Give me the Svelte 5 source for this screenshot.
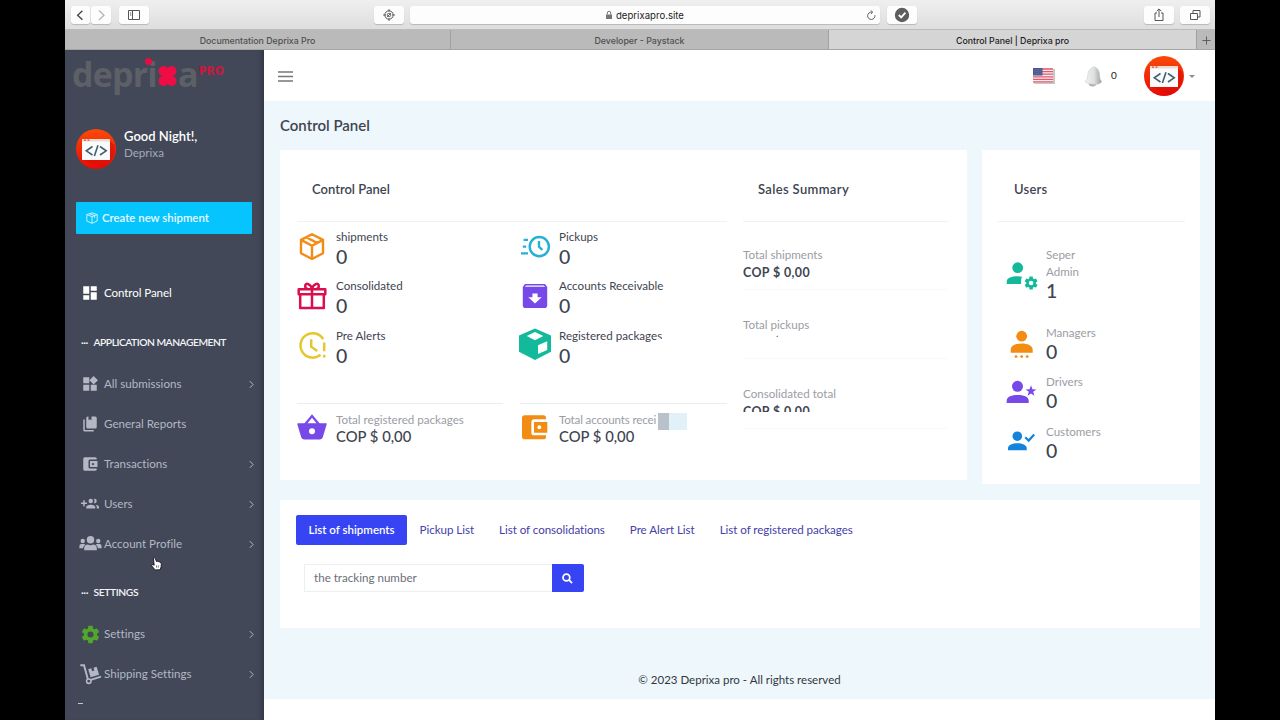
<script>
	const gear =
		'M12,15.5A3.5,3.5 0 0,1 8.5,12A3.5,3.5 0 0,1 12,8.5A3.5,3.5 0 0,1 15.5,12A3.5,3.5 0 0,1 12,15.5M19.43,12.97C19.47,12.65 19.5,12.33 19.5,12C19.5,11.67 19.47,11.34 19.43,11L21.54,9.37C21.73,9.22 21.78,8.95 21.66,8.73L19.66,5.27C19.54,5.05 19.27,4.96 19.05,5.05L16.56,6.05C16.04,5.66 15.5,5.32 14.87,5.07L14.5,2.42C14.46,2.18 14.25,2 14,2H10C9.75,2 9.54,2.18 9.5,2.42L9.13,5.07C8.5,5.32 7.96,5.66 7.44,6.05L4.95,5.05C4.73,4.96 4.46,5.05 4.34,5.27L2.34,8.73C2.21,8.95 2.27,9.22 2.46,9.37L4.57,11C4.53,11.34 4.5,11.67 4.5,12C4.5,12.33 4.53,12.65 4.57,12.97L2.46,14.63C2.27,14.78 2.21,15.05 2.34,15.27L4.34,18.73C4.46,18.95 4.73,19.03 4.95,18.95L7.44,17.94C7.96,18.34 8.5,18.68 9.13,18.93L9.5,21.58C9.54,21.82 9.75,22 10,22H14C14.25,22 14.46,21.82 14.5,21.58L14.87,18.93C15.5,18.67 16.04,18.34 16.56,17.94L19.05,18.95C19.27,19.03 19.54,18.95 19.66,18.73L21.66,15.27C21.78,15.05 21.73,14.78 21.54,14.63L19.43,12.97Z';
	const wallet =
		'M21,18V19A2,2 0 0,1 19,21H5C3.89,21 3,20.1 3,19V5A2,2 0 0,1 5,3H19A2,2 0 0,1 21,5V6H12C10.89,6 10,6.9 10,8V16A2,2 0 0,0 12,18M12,16H22V8H12M16,13.5A1.5,1.5 0 0,1 14.5,12A1.5,1.5 0 0,1 16,10.5A1.5,1.5 0 0,1 17.5,12A1.5,1.5 0 0,1 16,13.5Z';

	// inner svg markup, sidebar icons use a 24 unit box
	const menuIcons = {
		dashboard: '<path d="M13,3V9H21V3M13,21H21V11H13M3,21H11V15H3M3,13H11V3H3V13Z"/>',
		widgets:
			'<path d="M3,3H11V11H3ZM3,13H11V21H3ZM13,13H21V21H13ZM16.8,1.4L22.6,7.1L16.8,12.8L11.2,7.1Z"/>',
		reports:
			'<path d="M19,18H9A2,2 0 0,1 7,16V4A2,2 0 0,1 9,2H10V7L12,5.5L14,7V2H19A2,2 0 0,1 21,4V16A2,2 0 0,1 19,18M17,20V22H5A2,2 0 0,1 3,20V6H5V20H17Z"/>',
		wallet: `<path d="${wallet}"/>`,
		addUsers:
			'<path d="M13,13C11,13 7,14 7,16V18H19V16C19,14 15,13 13,13M19.62,13.16C20.45,13.88 21,14.82 21,16V18H24V16C24,14.46 21.63,13.5 19.62,13.16M13,11A3,3 0 0,0 16,8A3,3 0 0,0 13,5A3,3 0 0,0 10,8A3,3 0 0,0 13,11M18,11A3,3 0 0,0 21,8A3,3 0 0,0 18,5C17.68,5 17.37,5.05 17.08,5.14C17.65,5.95 18,6.94 18,8C18,9.06 17.65,10.04 17.08,10.85C17.37,10.95 17.68,11 18,11M8,10H5V7H3V10H0V12H3V15H5V12H8V10Z"/>',
		users:
			'<circle cx="12" cy="8.2" r="3.9"/><circle cx="3.9" cy="9.4" r="2.3"/><circle cx="20.1" cy="9.4" r="2.3"/><path d="M5.4,19V16.6C5.4,14.4 7,13.1 9.2,13.1C11,14 13,14 14.8,13.1C17,13.1 18.6,14.4 18.6,16.6V19ZM0.4,17V14.7Q0.4,12.5 2.6,12.5H5.2Q6,12.5 6.6,13Q4.3,14.4 4.2,17ZM23.6,17V14.7Q23.6,12.5 21.4,12.5H18.8Q18,12.5 17.4,13Q19.7,14.4 19.8,17Z"/>',
		gear: `<path d="${gear}"/>`,
		dolly:
			'<path d="M1.4,3.4H5.2L9.3,18M11.5,19L23,15.3" fill="none" stroke="currentColor" stroke-width="2"/><circle cx="10.2" cy="20" r="2.3" fill="none" stroke="currentColor" stroke-width="1.6"/><path d="M9.6,7.6L12.8,6.6L13.7,9.6L16,8.9L15.1,5.9L18.4,4.9L21,13.3L12.1,16Z"/>'
	};

	const menu = [
		{ label: 'All submissions', icon: 'widgets', arrow: true },
		{ label: 'General Reports', icon: 'reports' },
		{ label: 'Transactions', icon: 'wallet', arrow: true },
		{ label: 'Users', icon: 'addUsers', arrow: true },
		{ label: 'Account Profile', icon: 'users', arrow: true, wide: true }
	];

	const settingsMenu = [
		{ label: 'Settings', icon: 'gear', arrow: true, green: true },
		{ label: 'Shipping Settings', icon: 'dolly', arrow: true, wide: true }
	];

	const stats = [
		{
			label: 'shipments',
			color: 'orange',
			svg: '<g fill="none" stroke="currentColor" stroke-width="2.4" stroke-linejoin="round"><path d="M15,2.2L26,7.9V21.2L15,27L4,21.2V7.9ZM4,7.9L15,13.8L26,7.9M15,13.8V26.6M9.2,5.2L20.6,11.1"/></g>'
		},
		{
			label: 'Pickups',
			color: 'cyan',
			svg: '<g fill="none" stroke="currentColor" stroke-width="2.4"><circle cx="19.3" cy="14.6" r="9.6"/><path d="M19,9V14.8L22.4,17.8M3.6,7.9H8M2.8,14.6H6.2M1,21.4H8"/></g>'
		},
		{
			label: 'Consolidated',
			color: 'red',
			svg: '<g fill="none" stroke="currentColor" stroke-width="2.5" stroke-linejoin="round"><path d="M1.7,8.2H28.3V13.2H1.7ZM3.2,13.2V27H26.8V13.2M15,8V27M15,8C14,3 8.2,.8 8.2,5.2Q8.2,7.2 10.5,8M15,8C16,3 21.8,.8 21.8,5.2Q21.8,7.2 19.5,8"/></g>'
		},
		{
			label: 'Accounts Receivable',
			color: 'purple',
			svg: '<path fill-rule="evenodd" d="M5,3H25L27.2,6V24.2Q27.2,27 24.5,27H5.5Q2.8,27 2.8,24.2V6ZM6,4.4L5,5.7H25L24,4.4ZM12.4,12.5V16.2H8.3L15,22.5L21.7,16.2H17.6V12.5Z"/>'
		},
		{
			label: 'Pre Alerts',
			color: 'yellow',
			svg: '<g fill="none" stroke="currentColor" stroke-width="2.5"><path d="M26.2,8.2A12.2,12.2 0 1 0 23.5,23.8M14.2,8.3V15.7L20.2,20M27.2,11.5V20.3M27.2,23.7V26.6"/></g>'
		},
		{
			label: 'Registered package',
			cut: 's',
			color: 'teal',
			svg: '<path fill-rule="evenodd" d="M15,-2.6L31,4.6V20.8L15,29L-1,20.8V4.6ZM15,1L6.7,5.1L15,9.3L23.3,5.1ZM18,14.3V23L27.2,19V10.2Z"/>'
		}
	];

	const sales = [
		{ label: 'Total shipments', clip: '' },
		{ label: 'Total pickups', clip: 'clip-most' },
		{ label: 'Consolidated total', clip: 'clip-half' }
	];

	const users = [
		{
			label: 'Seper Admin',
			value: 1,
			color: 'teal',
			svg: `<circle cx="11.7" cy="7.7" r="5.4"/><path d="M.7,24V21.4C.7,18 6,16.3 11.7,16.3Q14,16.3 16,16.7Q14.6,20 15.2,24Z"/><path transform="translate(17.3 15.3) scale(.65)" fill-rule="evenodd" d="${gear}"/>`
		},
		{
			label: 'Managers',
			value: 0,
			color: 'orange',
			svg: '<circle cx="15.7" cy="7.2" r="5.4"/><path d="M4.7,23.8V20.7C4.7,16.5 10,14.5 15.7,14.5S26.7,16.5 26.7,20.7V23.8Z"/><circle cx="10" cy="27.6" r="1.4"/><circle cx="15.7" cy="27.6" r="1.4"/><circle cx="21.2" cy="27.6" r="1.4"/>'
		},
		{
			label: 'Drivers',
			value: 0,
			color: 'purple',
			svg: '<circle cx="11.5" cy="7.3" r="5.5"/><path d="M.7,24V21.4C.7,17.8 6,16 11.7,16S22.7,17.8 22.7,21.4V24ZM25,6.3L26.4,10.3L30.3,10.4L27.2,12.8L28.4,16.8L25,14.4L21.6,16.8L22.8,12.8L19.7,10.4L23.6,10.3Z"/>'
		},
		{
			label: 'Customers',
			value: 0,
			color: 'blue',
			svg: '<circle cx="11.3" cy="8.2" r="4.8"/><path d="M2,22.2V20.3C2,16.8 6.6,15.3 11.4,15.3S20.7,16.8 20.7,20.3V22.2Z"/><path d="M19.2,9.3L22.7,12.6L28.2,6.6" fill="none" stroke="currentColor" stroke-width="2.2"/>'
		}
	];

	const lists = [
		'List of shipments',
		'Pickup List',
		'List of consolidations',
		'Pre Alert List',
		'List of registered packages'
	];

	let active = $state(lists[0]);
</script>

{#snippet avatar()}
	<svg class="avatar" viewBox="0 0 40 40">
		<defs>
			<linearGradient id="red" x1="0" y1="0" x2="0" y2="1">
				<stop offset="0" stop-color="#fb4a08" />
				<stop offset="1" stop-color="#e80a06" />
			</linearGradient>
		</defs>
		<circle cx="20" cy="20" r="20" fill="url(#red)" />
		<path d="M34,12L38.5,16A20,20 0 0 1 25,39L6,30Z" fill="#d80d08" opacity=".6" />
		<path d="M6,10H34V31H6Z" fill="#fbfbfb" />
		<path d="M6,10H34V12.5H6Z" fill="#eadbd4" />
		<path d="M8,11.2H10M11.5,11.2H13.5" stroke="#e34a20" stroke-width="1.2" />
		<path
			d="M16.5,17.5L10.3,21.8L16.5,26M24,17.5L30.2,21.8L24,26M22,16.3L18.4,27"
			fill="none"
			stroke="#3f6170"
			stroke-width="1.6"
		/>
	</svg>
{/snippet}

{#snippet menuItem(item)}
	<a class="item" href="#top">
		<svg class="menu-icon" class:wide={item.wide} class:green={item.green} viewBox="0 0 24 24">
			{@html menuIcons[item.icon]}
		</svg>
		<span>{item.label}</span>
		{#if item.arrow}
			<svg class="chevron" viewBox="0 0 6 10"><path d="M1,1L5,5L1,9" /></svg>
		{/if}
	</a>
{/snippet}

<div class="screen">
	<div class="window">
		<div class="toolbar">
			<div class="tool back">
				<svg viewBox="0 0 20 18"><path d="M12,4.5L7,9.2L12,14" stroke="#444" stroke-width="1.4" /></svg>
			</div>
			<div class="tool forward">
				<svg viewBox="0 0 20 18"><path d="M8,4.5L13,9.2L8,14" stroke="#b5b5b5" stroke-width="1.3" /></svg>
			</div>
			<div class="tool panes">
				<svg viewBox="0 0 30 18"><path d="M9.5,4.5H20.5V13.5H9.5ZM13.5,4.5V13.5M11,7H12.3M11,9H12.3" stroke="#555" /></svg>
			</div>
			<div class="tool target">
				<svg viewBox="0 0 30 18">
					<circle cx="15" cy="9" r="4.2" stroke="#555" />
					<circle cx="15" cy="9" r="1.8" stroke="#777" />
					<path d="M15,3V6M15,12V15M9,9H12M18,9H21M13,11L17,7" stroke="#666" />
				</svg>
			</div>
			<div class="address">
				<svg class="lock" viewBox="0 0 8 10">
					<path d="M1,4.5H7V9H1Z" fill="#777" />
					<path d="M2.3,4.5V3A1.7,1.7 0 0 1 5.7,3V4.5" stroke="#777" />
				</svg>
				<span>deprixapro.site</span>
				<svg class="reload" viewBox="0 0 12 12">
					<path d="M9.7,5.6A4,4 0 1 1 6.5,2.4M5.2,.5L7.4,2.4L5.2,4.4" stroke="#555" />
				</svg>
			</div>
			<div class="tool check">
				<svg viewBox="0 0 30 18">
					<circle cx="15" cy="9" r="7.2" fill="#5e5e5e" />
					<path d="M11.8,9L14.2,11.4L18.4,6.6" stroke="#fff" stroke-width="1.8" />
				</svg>
			</div>
			<div class="tool share">
				<svg viewBox="0 0 30 18">
					<path d="M13,7H11V14.5H19V7H17M15,11V3M12.7,5.2L15,2.9L17.3,5.2" stroke="#555" />
				</svg>
			</div>
			<div class="tool windows">
				<svg viewBox="0 0 30 18">
					<path d="M10.5,7.5H17.5V13.5H10.5ZM13,7.2V4.5H20V11H17.8" stroke="#555" />
				</svg>
			</div>
		</div>
		<div class="tabs">
			<div class="tab first">Documentation Deprixa Pro</div>
			<div class="tab second">Developer - Paystack</div>
			<div class="tab current">Control Panel | Deprixa pro</div>
			<div class="tab plus">
				<svg viewBox="0 0 10 10"><path d="M5,.5V9.5M.5,5H9.5" stroke="#555" /></svg>
			</div>
		</div>

		<div class="page">
			<aside>
				<div class="logo">
					<span class="word">depri</span>
					<svg class="clover" viewBox="0 0 20 22">
						<circle cx="6" cy="6" r="5" />
						<circle cx="14" cy="6" r="5" />
						<circle cx="6" cy="16" r="5" />
						<circle cx="14" cy="16" r="5" />
						<path d="M4,11L10,5L16,11L10,17Z" />
					</svg>
					<span class="word">a</span>
					<span class="pro">PRO</span>
					<i class="dot"></i>
				</div>
				<div class="profile">
					{@render avatar()}
					<div>
						<div class="greeting">Good Night!,</div>
						<div class="name">Deprixa</div>
					</div>
				</div>
				<button class="create">
					<svg viewBox="0 0 12 12">
						<path d="M6,.8L11.2,2.6V9L6,11.3L.8,9V2.6ZM.8,2.6L6,4.6L11.2,2.6M6,4.6V11.3M3.4,1.7L8.6,3.6V6" />
					</svg>
					<span>Create new shipment</span>
				</button>
				<nav>
					<div class="active-item">
						{@render menuItem({ label: 'Control Panel', icon: 'dashboard' })}
					</div>
					<div class="section"><i>···</i>APPLICATION MANAGEMENT</div>
					{#each menu as item}
						{@render menuItem(item)}
					{/each}
					<div class="section settings"><i>···</i>SETTINGS</div>
					{#each settingsMenu as item}
						{@render menuItem(item)}
					{/each}
					<div class="more"></div>
				</nav>
				<svg class="pointer" viewBox="0 0 12 15">
					<path
						d="M2.6,1.2Q3.8,.2 4.7,1.6L6,4.8L7.2,4.6L8.6,5L9.9,5.4Q11.2,6 11.3,7.5Q11.4,10.5 10,13.8L4.6,14L1,9.8Q.2,8.3 1.5,8L3.5,8.8Z"
						fill="#fff"
						stroke="#15171c"
					/>
					<path d="M6,9V11.5M8,9V11.5" stroke="#333" stroke-width=".7" />
				</svg>
			</aside>

			<main>
				<header>
					<svg class="burger" viewBox="0 0 15 11">
						<path d="M0,1H15M0,5.5H15M0,10H15" />
					</svg>
					<svg class="flag" viewBox="0 0 24 19">
						<path d="M2,2H23V17H2Z" fill="#999" opacity=".55" />
						<path d="M1,1H21V15.5H1Z" fill="#f8ecef" />
						<path d="M1,2H21M1,4.6H21M1,7.2H21M1,9.8H21M1,12.4H21M1,14.8H21" stroke="#df5a6c" stroke-width="1.3" />
						<path d="M1,1H10.5V8.5H1Z" fill="#4c558e" />
						<path d="M2.4,2.8H10M2.4,4.8H10M2.4,6.8H10" stroke="#8990b9" stroke-width=".7" stroke-dasharray="1 1" />
					</svg>
					<svg class="bell" viewBox="0 0 20 24">
						<defs>
							<linearGradient id="bell">
								<stop offset="0" stop-color="#f1f1f1" />
								<stop offset=".55" stop-color="#dedfe0" />
								<stop offset="1" stop-color="#9b9da0" />
							</linearGradient>
						</defs>
						<ellipse cx="9" cy="20" rx="4" ry="2.4" fill="#b0b1b2" />
						<path
							d="M9,2.5Q10.5,.5 12,2.3Q16.3,4.5 16.4,11Q16.5,15.5 18.6,17.5Q17,20.8 10,20.2Q3,20 1,17.3Q4.2,14.5 4,10.5Q4.2,4.5 9,2.5Z"
							fill="url(#bell)"
							stroke="#c5c6c8"
							stroke-width=".5"
						/>
					</svg>
					<span class="count">0</span>
					{@render avatar()}
					<i class="caret"></i>
				</header>

				<div class="content">
					<h4>Control Panel</h4>
					<div class="cards">
						<div class="card summary">
							<section class="panel">
								<h5>Control Panel</h5>
								<div class="stats">
									{#each stats as stat}
										<div class="stat">
											<svg class="stat-icon {stat.color}" viewBox="0 0 30 30">{@html stat.svg}</svg>
											<div>
												<div class="stat-label">{stat.label}{#if stat.cut}<span class="cut">{stat.cut}</span>{/if}</div>
												<div class="stat-value">0</div>
											</div>
										</div>
									{/each}
								</div>
								<div class="totals">
									<div class="total">
										<svg class="stat-icon purple" viewBox="0 0 30 30">
											<path
												fill-rule="evenodd"
												d="M.5,11.3H7.5L15,2.3L22.5,11.3H29.5Q29.8,11.4 29.6,12.5L25.8,25.3Q25.2,27.4 23,27.4H7Q4.8,27.4 4.2,25.3L.4,12.5ZM10.5,11.3H19.5L15,5.8ZM15,16.3A3,3 0 1 0 15,22.3A3,3 0 1 0 15,16.3Z"
											/>
										</svg>
										<div>
											<div class="total-label">Total registered packages</div>
											<div class="total-value">COP $ 0,00</div>
										</div>
									</div>
									<div class="total">
										<svg class="stat-icon orange" viewBox="1.5 0.5 22.5 22.5"><path d={wallet} /></svg>
										<div>
											<div class="total-label narrow">Total accounts recei</div>
											<div class="total-value">COP $ 0,00</div>
										</div>
										<i class="block"></i>
									</div>
								</div>
							</section>
							<section class="sales">
								<h5>Sales Summary</h5>
								{#each sales as sale}
									<div class="sale">
										<div class="sale-label">{sale.label}</div>
										<div class="sale-value {sale.clip}">COP $ 0,00</div>
									</div>
								{/each}
							</section>
						</div>

						<div class="card users">
							<h5>Users</h5>
							{#each users as user}
								<div class="user" class:tall={user.value}>
									<svg class="user-icon {user.color}" viewBox="0 0 32 32">{@html user.svg}</svg>
									<div>
										<div class="user-label">{user.label}</div>
										<div class="user-value">{user.value}</div>
									</div>
								</div>
							{/each}
						</div>
					</div>

					<div class="card lists">
						<div class="pills">
							{#each lists as list}
								<button class:active={list === active} onclick={() => (active = list)}>{list}</button>
							{/each}
						</div>
						<div class="search">
							<input placeholder="the tracking number" />
							<button aria-label="search">
								<svg viewBox="0 0 12 12">
									<circle cx="4.8" cy="4.8" r="3.7" />
									<path d="M7.6,7.6L11,11" />
								</svg>
							</button>
						</div>
					</div>
				</div>
				<footer>© 2023 Deprixa pro - All rights reserved</footer>
			</main>
		</div>
	</div>
</div>

<style>
	:global(body) {
		background: #000;
	}
	* {
		box-sizing: border-box;
	}
	.screen {
		height: 720px;
		padding: 0 65px;
		overflow: hidden;
		background: #000;
		font-family: Lato, 'Open Sans', sans-serif;
		font-size: 11.6px;
		font-variant-ligatures: none;
		color: #3e4451;
	}
	.window {
		height: 720px;
		display: flex;
		flex-direction: column;
		overflow: hidden;
		background: #fff;
	}
	svg {
		display: block;
		flex: none;
		overflow: visible;
		fill: currentColor;
	}
	button {
		border: 0;
		font: inherit;
		color: inherit;
		background: none;
	}
	h4,
	h5 {
		margin: 0;
		font-weight: 600;
	}

	/* browser */
	.toolbar {
		height: 30px;
		flex: none;
		display: flex;
		align-items: center;
		padding: 0 5px 0 6px;
		background: linear-gradient(#efefef, #dedede);
		border-bottom: 1px solid #bcbcbc;
		font-family: Inter, Roboto, sans-serif;
	}
	.toolbar svg {
		fill: none;
	}
	.tool {
		width: 30px;
		height: 18px;
		flex: none;
		border-radius: 3px;
		background: #fdfdfd;
		box-shadow: 0 1px 1px rgba(0, 0, 0, 0.18);
	}
	.tool svg {
		height: 18px;
		width: 100%;
	}
	.back {
		width: 19px;
		margin-right: 1px;
	}
	.forward {
		width: 20px;
	}
	.panes {
		margin-left: 8px;
	}
	.target {
		margin-left: 225px;
	}
	.address {
		width: 470px;
		height: 18px;
		flex: none;
		margin: 0 7px 0 6px;
		padding: 1px 3px 0 0;
		display: flex;
		align-items: center;
		border-radius: 3px;
		background: #fdfdfd;
		box-shadow: 0 1px 1px rgba(0, 0, 0, 0.18);
		font-size: 9.6px;
		color: #222;
	}
	.lock {
		width: 8px;
		height: 10px;
		margin: -1px 3px 0 195px;
	}
	.reload {
		width: 11px;
		height: 11px;
		margin-left: auto;
	}
	.share {
		margin-left: auto;
		margin-right: 6px;
	}
	.tabs {
		height: 20px;
		flex: none;
		display: flex;
		border-bottom: 1px solid #a5a5a5;
		background: #bababa;
		font: 500 8.8px/19px Inter, Roboto, sans-serif;
		text-align: center;
		color: #4f4f4f;
	}
	.tab {
		padding-top: 1px;
		border-right: 1px solid #a0a0a0;
	}
	.first {
		width: 386px;
	}
	.second {
		width: 378px;
	}
	.current {
		width: 368px;
		background: #d5d5d5;
		color: #1c1c1c;
	}
	.plus {
		flex: 1;
		display: flex;
		align-items: center;
		justify-content: center;
		border: 0;
	}
	.plus svg {
		width: 9px;
		height: 9px;
	}

	/* sidebar */
	.page {
		flex: 1;
		display: flex;
		min-height: 0;
	}
	aside {
		position: relative;
		width: 199px;
		flex: none;
		background: #424857;
		box-shadow: inset -6px 0 5px -4px rgba(25, 30, 42, 0.45);
		color: #b3b8c4;
	}
	.logo {
		position: relative;
		height: 52px;
		padding-left: 7px;
		display: flex;
	}
	.word {
		font: 700 34px/48px 'Open Sans', sans-serif;
		letter-spacing: -0.8px;
		color: #5d6066;
	}
	.clover {
		width: 21px;
		height: 22px;
		margin-top: 15px;
		fill: #f00c45;
	}
	.pro {
		margin: 14px 0 0 1px;
		font: 800 12px/13px 'Open Sans', sans-serif;
		color: #c01b42;
	}
	.dot {
		position: absolute;
		left: 80px;
		top: 8px;
		width: 7px;
		height: 7px;
		border-radius: 50%;
		background: #e01045;
	}
	.profile {
		display: flex;
		gap: 8px;
		padding: 27px 0 0 11px;
		height: 100px;
	}
	.avatar {
		width: 40px;
		height: 40px;
	}
	.greeting {
		margin-top: -1px;
		font-size: 13px;
		font-weight: 600;
		line-height: 17px;
		color: #fff;
	}
	.name {
		line-height: 16px;
		color: #a3a8b5;
	}
	.create {
		width: 176px;
		height: 32px;
		margin: 0 0 39px 11px;
		padding: 0 0 0 10px;
		display: flex;
		align-items: center;
		gap: 4px;
		background: #06c4fd;
		border-radius: 1px;
		color: #e6f8ff;
		font-size: 11.4px;
		font-weight: 600;
	}
	.create svg {
		width: 12px;
		height: 12px;
		fill: none;
		stroke: #d8f5ff;
		stroke-width: 0.9;
	}
	.create span {
		padding-bottom: 1px;
	}
	nav {
		display: flex;
		flex-direction: column;
	}
	.item {
		height: 40px;
		padding: 0 10px 0 13px;
		display: flex;
		align-items: center;
		color: inherit;
		text-decoration: none;
	}
	.item span {
		flex: 1;
		padding-bottom: 2px;
	}
	.active-item {
		color: #fff;
	}
	.active-item span {
		letter-spacing: -0.1px;
	}
	.menu-icon {
		width: 18px;
		height: 18px;
		margin: 0 5px 0 3px;
	}
	.menu-icon.wide {
		width: 23px;
		height: 23px;
		margin: 0 2px 2px 1px;
	}
	.menu-icon.green {
		width: 21px;
		height: 21px;
		margin: 0 3px 0 2px;
		color: #52a62c;
	}
	.chevron {
		width: 5px;
		height: 9px;
		margin-top: 1px;
		fill: none;
		stroke: currentColor;
		stroke-width: 1.2;
	}
	.section {
		height: 51px;
		padding: 7px 0 0 16px;
		display: flex;
		align-items: center;
		font-size: 10.3px;
		font-weight: 600;
		letter-spacing: -0.5px;
		color: #f2f4f8;
	}
	.section i {
		width: 12.5px;
		font-style: normal;
	}
	.section.settings {
		height: 50px;
		padding-top: 5px;
		letter-spacing: -0.4px;
	}
	.more {
		width: 5px;
		height: 1px;
		margin: 9px 0 0 13px;
		background: #c3c7cf;
	}
	.pointer {
		position: absolute;
		left: 86px;
		top: 507px;
		width: 11px;
		height: 14px;
	}

	/* content */
	main {
		flex: 1;
		min-width: 0;
	}
	header {
		height: 51px;
		padding: 1px 20px 0 14px;
		display: flex;
		align-items: center;
	}
	.burger {
		width: 15px;
		height: 11px;
		margin-right: auto;
		stroke: #777;
		stroke-width: 1.7;
	}
	.flag {
		width: 24px;
		height: 19px;
		margin-right: 28px;
	}
	.bell {
		width: 19px;
		height: 23px;
		margin-right: 7px;
	}
	.count {
		width: 8px;
		margin: -3px 25px 0 1px;
		font-size: 10px;
		color: #222;
	}
	.caret {
		margin-left: 5px;
		border: 3.5px solid transparent;
		border-top-color: #8b8b8b;
		border-bottom: 0;
	}
	.content {
		padding: 0 15px 0 16px;
		background: #eef7fb;
	}
	h4 {
		font-size: 15px;
		line-height: 49px;
	}
	.cards {
		display: flex;
		align-items: flex-start;
		gap: 15px;
		height: 350px;
	}
	.card {
		background: #fff;
	}
	.summary {
		width: 687px;
		height: 330px;
		padding: 0 19px 0 17px;
		display: flex;
		gap: 16px;
	}
	.panel {
		width: 430px;
	}
	h5 {
		height: 72px;
		padding: 7px 0 0 15px;
		border-bottom: 1px solid #f1f2f3;
		font-size: 13px;
		line-height: 64px;
	}
	.stats {
		height: 181px;
		display: grid;
		grid-template-columns: 206px 207px;
		grid-auto-rows: 49.5px;
		column-gap: 17px;
		padding-top: 5px;
	}
	.stat {
		display: flex;
		gap: 9px;
	}
	.stat-icon {
		width: 30px;
		height: 30px;
		margin-top: 4.5px;
	}
	.stat-label {
		margin-top: -0.5px;
		line-height: 20px;
	}
	.cut {
		display: inline-block;
		height: 13px;
		overflow: hidden;
		line-height: 20px;
		vertical-align: top;
	}
	.stat-value,
	.user-value {
		font-size: 19.5px;
		font-weight: 500;
		line-height: 19px;
	}
	.totals {
		display: grid;
		grid-template-columns: 206px 207px;
		column-gap: 17px;
	}
	.total {
		position: relative;
		display: flex;
		gap: 9px;
		padding-top: 7px;
		border-top: 1px solid #ececec;
	}
	.total .stat-icon {
		margin-top: 1px;
	}
	.total-label,
	.sale-label,
	.user-label {
		line-height: 18px;
		color: #9a9da4;
	}
	.narrow {
		letter-spacing: -0.15px;
	}
	.total-value {
		margin-top: -1px;
		font-size: 14.8px;
		font-weight: 500;
		line-height: 16px;
	}
	.block {
		position: absolute;
		left: 138px;
		top: 9px;
		width: 29px;
		height: 17px;
		background: linear-gradient(90deg, #b9c2ca 38%, #e2f0f7 38%);
	}
	.orange {
		color: #f28c13;
	}
	.cyan {
		color: #27afd6;
	}
	.red {
		color: #da0f50;
	}
	.purple {
		color: #7649e8;
	}
	.yellow {
		color: #e8c62b;
	}
	.teal {
		color: #12b99a;
	}
	.blue {
		color: #1583dc;
	}
	.sales {
		width: 205px;
	}
	.sales h5 {
		letter-spacing: 0.35px;
	}
	.sale {
		height: 69.5px;
		padding-top: 26px;
		border-bottom: 1px solid #f9f9f9;
	}
	h5 + .sale {
		height: 67.5px;
		padding-top: 24px;
	}
	.sale-label {
		line-height: 17px;
	}
	.sale-value {
		height: 19px;
		line-height: 19px;
		overflow: hidden;
		font-size: 12.4px;
		font-weight: 700;
		letter-spacing: 0.4px;
	}
	.sale-value.clip-most {
		height: 4px;
	}
	.sale-value.clip-half {
		height: 10px;
	}
	.users {
		width: 218px;
		height: 334px;
		padding: 0 15px;
	}
	.users h5 {
		padding-left: 17px;
		margin-bottom: 24px;
		letter-spacing: 0.2px;
	}
	.user {
		height: 49.5px;
		padding-left: 9px;
		display: flex;
		gap: 8px;
	}
	.user.tall {
		height: 77.5px;
	}
	.user-icon {
		width: 32px;
		height: 32px;
		margin-top: 5.5px;
	}
	.tall .user-icon {
		margin-top: 14px;
	}
	.user-label {
		width: 60px;
		line-height: 17px;
	}
	.tall .user-label {
		width: 40px;
	}
	.user-value {
		line-height: 21px;
	}
	.lists {
		height: 128px;
		padding: 15px 16px 0;
	}
	.pills {
		display: flex;
	}
	.pills button {
		height: 30px;
		padding: 0 12.5px 1px;
		border-radius: 2px;
		white-space: nowrap;
		color: #4440a8;
		letter-spacing: -0.05px;
	}
	.pills .active {
		background: #3644f4;
		color: #fff;
		font-size: 11.5px;
		font-weight: 600;
		letter-spacing: 0;
	}
	.search {
		display: flex;
		margin: 19px 0 0 8px;
	}
	input {
		width: 248px;
		height: 28px;
		padding: 0 10px 1px 9px;
		border: 1px solid #eceef0;
		border-right: 0;
		font: inherit;
		outline: none;
	}
	input::placeholder {
		color: #6c6f76;
	}
	.search button {
		width: 32px;
		height: 28px;
		padding: 0 0 0 10px;
		border-radius: 0 2px 2px 0;
		background: #3644f4;
	}
	.search svg {
		width: 11px;
		height: 11px;
		fill: none;
		stroke: #fff;
		stroke-width: 1.9;
	}
	footer {
		height: 71px;
		padding-top: 33px;
		line-height: 38px;
		text-align: center;
		background: #eef7fb;
		color: #33383f;
		font-size: 11.5px;
	}
</style>
